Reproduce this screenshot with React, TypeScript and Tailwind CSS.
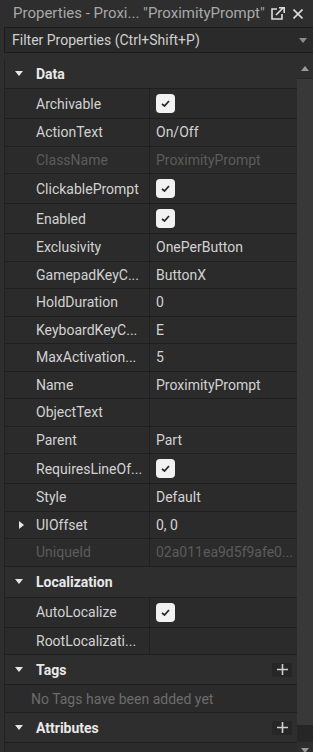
import React from 'react';

type Row = {
  name: string;
  value?: string;
  kind: 'check' | 'text' | 'disabled';
  expand?: boolean;
};

const dataRows: Row[] = [
  { name: 'Archivable', kind: 'check' },
  { name: 'ActionText', value: 'On/Off', kind: 'text' },
  { name: 'ClassName', value: 'ProximityPrompt', kind: 'disabled' },
  { name: 'ClickablePrompt', kind: 'check' },
  { name: 'Enabled', kind: 'check' },
  { name: 'Exclusivity', value: 'OnePerButton', kind: 'text' },
  { name: 'GamepadKeyC...', value: 'ButtonX', kind: 'text' },
  { name: 'HoldDuration', value: '0', kind: 'text' },
  { name: 'KeyboardKeyC...', value: 'E', kind: 'text' },
  { name: 'MaxActivation...', value: '5', kind: 'text' },
  { name: 'Name', value: 'ProximityPrompt', kind: 'text' },
  { name: 'ObjectText', value: '', kind: 'text' },
  { name: 'Parent', value: 'Part', kind: 'text' },
  { name: 'RequiresLineOf...', kind: 'check' },
  { name: 'Style', value: 'Default', kind: 'text' },
  { name: 'UIOffset', value: '0, 0', kind: 'text', expand: true },
  { name: 'UniqueId', value: '02a011ea9d5f9afe0...', kind: 'disabled' },
];

const localizationRows: Row[] = [
  { name: 'AutoLocalize', kind: 'check' },
  { name: 'RootLocalizati...', value: '', kind: 'text' },
];

function Checkbox() {
  return (
    <div className="w-[19px] h-[19px] rounded-[4px] bg-[#f2f2f2] flex items-center justify-center">
      <svg width="9" height="7" viewBox="0 0 9 7">
        <path d="M1 4 L3.5 6 L8 1" stroke="#2a2a2a" strokeWidth="1.8" fill="none" />
      </svg>
    </div>
  );
}

function DownTriangle({ color = '#e6e6e6' }: { color?: string }) {
  return (
    <svg width="8" height="5" viewBox="0 0 8 5">
      <path d="M0 0 H8 L4 5 Z" fill={color} />
    </svg>
  );
}

function PropRow({ row }: { row: Row }) {
  const h = row.kind === 'check' ? 'h-[30px]' : 'h-[27.5px]';
  const textColor = row.kind === 'disabled' ? 'text-[#5c5c5c]' : 'text-[#d2d2d2]';
  return (
    <div className={`flex ${h} border-b border-[#1f1f1f] bg-[#2b2b2b]`}>
      <div className="w-[145px] flex items-center border-r border-[#1f1f1f] shrink-0">
        <div className="w-[31px] flex items-center justify-center pl-[1px]">
          {row.expand && (
            <svg width="5" height="8" viewBox="0 0 5 8">
              <path d="M0 0 V8 L5 4 Z" fill="#e6e6e6" />
            </svg>
          )}
        </div>
        <span className={`whitespace-nowrap ${textColor}`}>{row.name}</span>
      </div>
      <div className="flex-1 flex items-center pl-[6px]">
        {row.kind === 'check' ? (
          <Checkbox />
        ) : (
          <span className={`whitespace-nowrap ${textColor}`}>{row.value}</span>
        )}
      </div>
    </div>
  );
}

function SectionHeader({ title, plus, tall }: { title: string; plus?: boolean; tall?: boolean }) {
  return (
    <div
      className={`flex items-center ${tall ? 'h-[31px]' : 'h-[30px]'} border-b border-[#1f1f1f] bg-[#2e2e2e]`}
    >
      <div className="w-[28px] flex items-center justify-center">
        <DownTriangle />
      </div>
      <span className="ml-[3px] font-bold text-[#e8e8e8]">{title}</span>
      {plus && (
        <div className="ml-auto mr-[5px] w-[20px] h-[14px] bg-[#262626] flex items-center justify-center">
          <svg width="11" height="11" viewBox="0 0 11 11">
            <path d="M5.5 0 V11 M0 5.5 H11" stroke="#d0d0d0" strokeWidth="1.6" />
          </svg>
        </div>
      )}
    </div>
  );
}

export default function App() {
  return (
    <div
      className="w-[313px] h-[752px] overflow-hidden bg-[#2e2e2e] text-[14px] leading-none"
      style={{ fontFamily: 'Roboto, "Noto Sans", sans-serif' }}
    >
      {/* Title bar */}
      <div className="h-[27px] flex items-center pl-[13px] pr-[10px] text-[#a8a8a8] text-[15px]">
        <span className="whitespace-nowrap">Properties - Proxi... "ProximityPrompt"</span>
        <div className="ml-auto flex items-center gap-[8px]">
          <svg width="14" height="13" viewBox="0 0 14 13">
            <path d="M6 2 H1 V12 H11 V7" stroke="#dcdcdc" strokeWidth="1.6" fill="none" />
            <path d="M5 8 L12.5 0.5 M8 0.8 H13.2 V6" stroke="#dcdcdc" strokeWidth="1.6" fill="none" />
          </svg>
          <svg width="10" height="10" viewBox="0 0 10 10">
            <path d="M0.5 0.5 L9.5 9.5 M9.5 0.5 L0.5 9.5" stroke="#dcdcdc" strokeWidth="1.6" />
          </svg>
        </div>
      </div>

      {/* Filter */}
      <div className="ml-[4px] h-[26px] border border-r-0 border-[#1c1c1c] bg-[#2a2a2a] flex items-center pl-[7px] pr-[6px] text-[#cfcfcf]">
        <span className="whitespace-nowrap">Filter Properties (Ctrl+Shift+P)</span>
        <div className="ml-auto">
          <DownTriangle color="#8c8c8c" />
        </div>
      </div>

      {/* Properties panel */}
      <div className="mt-[6px] flex h-[700px]">
        <div className="w-[293px] ml-[4px] bg-[#2b2b2b] border-l border-[#222222]">
          <SectionHeader title="Data" />
          {dataRows.map((r) => (
            <PropRow key={r.name} row={r} />
          ))}
          <SectionHeader title="Localization" tall />
          {localizationRows.map((r) => (
            <PropRow key={r.name} row={r} />
          ))}
          <SectionHeader title="Tags" plus />
          <div className="h-[28px] flex items-center pl-[26px] border-b border-[#1f1f1f] text-[#6c6c6c]">
            No Tags have been added yet
          </div>
          <SectionHeader title="Attributes" plus />
        </div>

        {/* Scrollbar */}
        <div className="w-[16px] flex flex-col bg-[#2e2e2e]">
          <div className="h-[19px] flex items-center justify-center">
            <svg width="8" height="5" viewBox="0 0 8 5">
              <path d="M0 5 H8 L4 0 Z" fill="#9a9a9a" />
            </svg>
          </div>
          <div className="flex-1 bg-[#383838] border-t border-[#262626]" />
          <div className="h-[17px] bg-[#262626]" />
          <div className="h-[17px] flex items-center justify-center bg-[#2e2e2e]">
            <DownTriangle color="#9a9a9a" />
          </div>
        </div>
      </div>
    </div>
  );
}
